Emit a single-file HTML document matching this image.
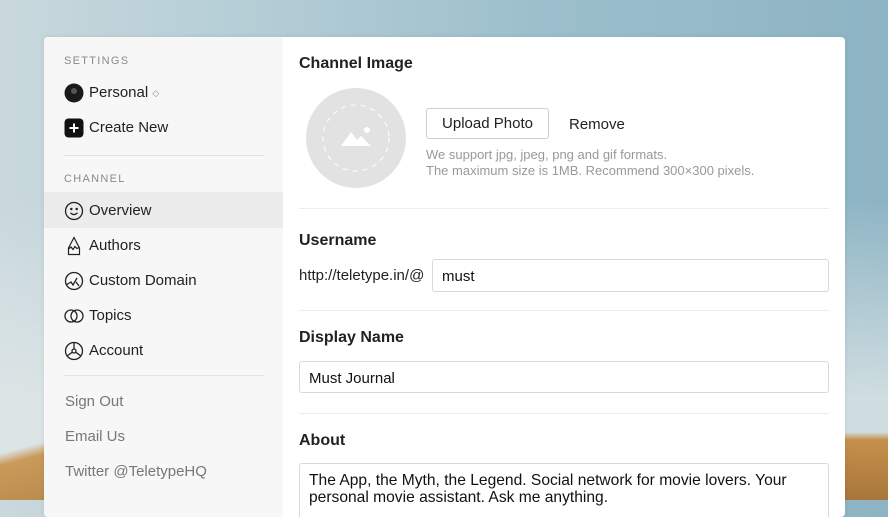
<!DOCTYPE html>
<html><head><meta charset="utf-8"><style>
*{margin:0;padding:0;box-sizing:border-box}
body{width:888px;height:500px;overflow:hidden;position:relative;font-family:"Liberation Sans",Arial,sans-serif;
background:linear-gradient(90deg,#c9d8dd 0%,#b3cdd6 30%,#9dbfcc 60%,#8db4c4 100%)}
.fog{position:absolute;left:0;top:0;width:888px;height:500px;background:linear-gradient(180deg,rgba(255,255,255,0) 0%,rgba(255,255,255,0) 40%,rgba(225,232,232,.8) 80%)}
.sandL{position:absolute;left:0;top:0;width:60px;height:500px;background:linear-gradient(165deg,transparent 0,transparent 438px,#c99a5a 450px,#b98a4c 500px)}
.sandR{position:absolute;left:840px;top:0;width:48px;height:500px;background:linear-gradient(180deg,transparent 0,transparent 432px,#c4904c 440px,#a9763c 500px)}
.panel{position:absolute;left:44px;top:37px;width:801px;height:480px;background:#fff;border-radius:4px;overflow:hidden;box-shadow:0 0 6px rgba(0,0,0,.08)}
.side{position:absolute;left:0;top:0;width:239px;height:100%;background:#f7f7f7}
.lab{position:absolute;left:20px;font-size:11px;letter-spacing:1.3px;color:#8a8a8a}
.it{position:absolute;left:20px;font-size:15px;color:#222;height:20px;line-height:20px;display:flex;align-items:center}
.it svg{width:20px;height:20px;margin-right:5px;flex:none}
.gr{position:absolute;left:21px;font-size:15px;color:#777}
.hr{position:absolute;left:20px;width:200px;height:1px;background:#e3e3e3}
.sel{position:absolute;left:0;top:155px;width:239px;height:36px;background:#ececec}
h3{position:absolute;font-size:16px;font-weight:bold;color:#222;left:255px}
.mhr{position:absolute;left:255px;width:530px;height:1px;background:#ececec}
.inp{position:absolute;border:1px solid #d8d8d8;border-radius:3px;font-size:15px;color:#111;padding-left:9px;display:flex;align-items:center}
</style></head><body>
<div class="fog"></div><div class="sandL"></div><div class="sandR"></div>
<div class="panel">
 <div class="side">
  <div class="lab" style="top:18px">SETTINGS</div>
  <div class="it" style="top:46px"><svg viewBox="0 0 20 20"><circle cx="10" cy="10" r="9.5" fill="#1a1a1a"/><circle cx="10" cy="8" r="3" fill="#555"/></svg>Personal <span style="font-size:9px;color:#888;margin-left:4px">◇</span></div>
  <div class="it" style="top:81px"><svg viewBox="0 0 20 20"><rect x=".5" y=".5" width="19" height="19" rx="4" fill="#111"/><path d="M10 5.5v9M5.5 10h9" stroke="#fff" stroke-width="2"/></svg>Create New</div>
  <div class="hr" style="top:118px"></div>
  <div class="lab" style="top:136px">CHANNEL</div>
  <div class="sel"></div>
  <div class="it" style="top:164px"><svg viewBox="0 0 20 20" fill="none" stroke="#222" stroke-width="1.3"><circle cx="10" cy="10" r="8.5"/><circle cx="7.3" cy="8" r=".6" fill="#222"/><circle cx="12.7" cy="8" r=".6" fill="#222"/><path d="M6.5 11.8q3.5 3.5 7 0"/></svg>Overview</div>
  <div class="it" style="top:199px"><svg viewBox="0 0 20 20" fill="none" stroke="#222" stroke-width="1.2"><path d="M10 1.5L4.5 12v6.5h11V12z"/><path d="M4.5 13l2.5-2 2 2.5 2-3 2 2 2-1"/></svg>Authors</div>
  <div class="it" style="top:234px"><svg viewBox="0 0 20 20" fill="none" stroke="#222" stroke-width="1.3"><circle cx="10" cy="10" r="8.5"/><path d="M2 14l5-3 2 3 4-7M12 11l3 4"/></svg>Custom Domain</div>
  <div class="it" style="top:269px"><svg viewBox="0 0 20 20" fill="none" stroke="#222" stroke-width="1.3"><circle cx="7" cy="10" r="6"/><circle cx="13" cy="10" r="6"/></svg>Topics</div>
  <div class="it" style="top:304px"><svg viewBox="0 0 20 20" fill="none" stroke="#222" stroke-width="1.3"><circle cx="10" cy="10" r="8.5"/><circle cx="10" cy="10" r="2"/><path d="M10 8V1.5M8.3 11.2L3 15M11.7 11.2L17 15"/></svg>Account</div>
  <div class="hr" style="top:338px"></div>
  <div class="gr" style="top:356px">Sign Out</div>
  <div class="gr" style="top:391px">Email Us</div>
  <div class="gr" style="top:426px">Twitter @TeletypeHQ</div>
 </div>
 <h3 style="top:18px">Channel Image</h3>
 <svg style="position:absolute;left:262px;top:51px" width="100" height="100" viewBox="0 0 100 100"><circle cx="50" cy="50" r="50" fill="#e2e2e2"/><circle cx="50" cy="50" r="33" fill="none" stroke="#fff" stroke-width="1" stroke-dasharray="5 5"/><path d="M35 58l10-14 6 8 4-4 10 10z" fill="#fff"/><circle cx="61" cy="42" r="3" fill="#fff"/></svg>
 <div style="position:absolute;left:382px;top:71px;width:123px;height:31px;border:1px solid #cfcfcf;border-radius:3px;font-size:15px;color:#222;text-align:center;line-height:30px">Upload Photo</div>
 <div style="position:absolute;left:525px;top:79px;font-size:15px;color:#222">Remove</div>
 <div style="position:absolute;left:382px;top:110px;font-size:13px;color:#999;line-height:16px">We support jpg, jpeg, png and gif formats.<br>The maximum size is 1MB. Recommend 300×300 pixels.</div>
 <div class="mhr" style="top:171px"></div>
 <h3 style="top:195px">Username</h3>
 <div style="position:absolute;left:255px;top:230px;font-size:15px;color:#222">http://teletype.in/@</div>
 <div class="inp" style="left:388px;top:222px;width:397px;height:33px;padding-top:2px">must</div>
 <div class="mhr" style="top:273px"></div>
 <h3 style="top:292px">Display Name</h3>
 <div class="inp" style="left:255px;top:324px;width:530px;height:32px;padding-top:2px">Must Journal</div>
 <div class="mhr" style="top:376px"></div>
 <h3 style="top:395px">About</h3>
 <div class="inp" style="left:255px;top:426px;width:530px;height:60px;align-items:flex-start;padding-top:8px;line-height:17px;font-size:15.6px">The App, the Myth, the Legend. Social network for movie lovers. Your personal movie assistant. Ask me anything.</div>
</div>
</body></html>
